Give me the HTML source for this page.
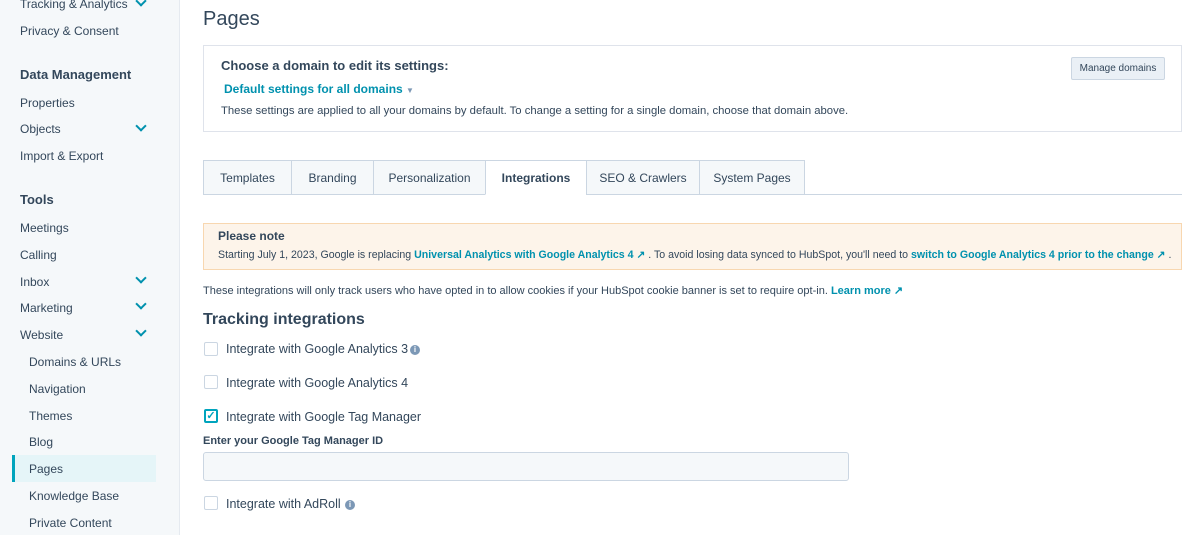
<!DOCTYPE html>
<html><head><style>
*{margin:0;padding:0;box-sizing:border-box}
body{width:1200px;height:535px;overflow:hidden;font-family:"Liberation Sans",sans-serif;color:#33475b;background:#fff;position:relative;font-size:13px}
.sb{position:absolute;left:0;top:0;width:180px;height:535px;background:#f5f8fa;border-right:1px solid #e5eaf0}
.a{position:absolute;white-space:nowrap}
.si{left:20px;font-size:12px;line-height:14px}
.sub{left:29px}
.h{font-weight:bold;font-size:13px}
.chev{position:absolute;left:137px;width:8px;height:8px;border-right:2px solid #0091ae;border-bottom:2px solid #0091ae;transform:rotate(45deg)}
.link{color:#0091ae;font-weight:bold}
.tab{position:absolute;top:160px;height:35px;border:1px solid #cbd6e2;background:#f5f8fa;font-size:12px;line-height:34px;text-align:center}
.cb{position:absolute;left:204px;width:14px;height:14px;border:1px solid #cbd6e2;border-radius:2px;background:#fff}
.lbl{left:226px;font-size:12.5px}
.info{position:absolute;width:10px;height:10px;border-radius:50%;background:#7c98b6;color:#fff;font-size:8px;line-height:10px;text-align:center;font-weight:bold}
</style></head><body>
<div class="sb">
<div class="a si" style="top:-3px">Tracking &amp; Analytics</div><div class="chev" style="top:-3px"></div>
<div class="a si" style="top:24px">Privacy &amp; Consent</div>
<div class="a si h" style="top:68px">Data Management</div>
<div class="a si" style="top:96px">Properties</div>
<div class="a si" style="top:122px">Objects</div><div class="chev" style="top:122px"></div>
<div class="a si" style="top:149px">Import &amp; Export</div>
<div class="a si h" style="top:193px">Tools</div>
<div class="a si" style="top:221px">Meetings</div>
<div class="a si" style="top:248px">Calling</div>
<div class="a si" style="top:275px">Inbox</div><div class="chev" style="top:274px"></div>
<div class="a si" style="top:301px">Marketing</div><div class="chev" style="top:300px"></div>
<div class="a si" style="top:328px">Website</div><div class="chev" style="top:327px"></div>
<div class="a si sub" style="top:355px">Domains &amp; URLs</div>
<div class="a si sub" style="top:382px">Navigation</div>
<div class="a si sub" style="top:409px">Themes</div>
<div class="a si sub" style="top:435px">Blog</div>
<div class="a" style="left:12px;top:455px;width:144px;height:27px;background:#e5f5f8;border-left:3px solid #00a4bd"></div>
<div class="a si sub" style="top:462px">Pages</div>
<div class="a si sub" style="top:489px">Knowledge Base</div>
<div class="a si sub" style="top:516px">Private Content</div>
</div>

<div class="a" style="left:203px;top:8px;font-size:20px;font-weight:300">Pages</div>
<div class="a" style="left:203px;top:45px;width:979px;height:87px;border:1px solid #dfe3eb"></div>
<div class="a h" style="left:221px;top:58px;font-size:13px">Choose a domain to edit its settings:</div>
<div class="a link" style="left:224px;top:82px;font-size:12px">Default settings for all domains <span style="font-size:8px;color:#7c98b6">▼</span></div>
<div class="a" style="left:221px;top:105px;font-size:11.3px">These settings are applied to all your domains by default. To change a setting for a single domain, choose that domain above.</div>
<div class="a" style="left:1071px;top:57px;width:94px;height:23px;background:#eaf0f6;border:1px solid #cbd6e2;border-radius:2px;font-size:10px;line-height:22px;text-align:center">Manage domains</div>

<div class="a" style="left:203px;top:194px;width:979px;border-top:1px solid #cbd6e2"></div>
<div class="tab" style="left:203px;width:89px">Templates</div>
<div class="tab" style="left:291px;width:83px">Branding</div>
<div class="tab" style="left:373px;width:113px">Personalization</div>
<div class="tab" style="left:485px;width:102px;background:#fff;border-bottom:1px solid #fff;font-weight:bold">Integrations</div>
<div class="tab" style="left:586px;width:114px">SEO &amp; Crawlers</div>
<div class="tab" style="left:699px;width:106px">System Pages</div>

<div class="a" style="left:203px;top:223px;width:979px;height:47px;background:#fdf4ea;border:1px solid #f8d7b0"></div>
<div class="a h" style="left:218px;top:229px;font-size:12px">Please note</div>
<div class="a" style="left:218px;top:249px;font-size:10.6px">Starting July 1, 2023, Google is replacing <span class="link">Universal Analytics with Google Analytics 4 ↗</span> . To avoid losing data synced to HubSpot, you'll need to <span class="link">switch to Google Analytics 4 prior to the change ↗</span> .</div>
<div class="a" style="left:203px;top:284px;font-size:11px">These integrations will only track users who have opted in to allow cookies if your HubSpot cookie banner is set to require opt-in. <span class="link">Learn more ↗</span></div>
<div class="a h" style="left:203px;top:311px;font-size:16px">Tracking integrations</div>

<div class="cb" style="top:342px"></div><div class="a lbl" style="top:342px">Integrate with Google Analytics 3</div><div class="info" style="left:410px;top:345px">i</div>
<div class="cb" style="top:375px"></div><div class="a lbl" style="top:376px">Integrate with Google Analytics 4</div>
<div class="cb" style="top:409px;border:2px solid #00a4bd;color:#00a4bd;font-size:11px;line-height:10px;text-align:center;font-weight:bold">✓</div><div class="a lbl" style="top:410px">Integrate with Google Tag Manager</div>
<div class="a h" style="left:203px;top:435px;font-size:11px">Enter your Google Tag Manager ID</div>
<div class="a" style="left:203px;top:452px;width:646px;height:29px;background:#f5f8fa;border:1px solid #cbd6e2;border-radius:3px"></div>
<div class="cb" style="top:496px"></div><div class="a lbl" style="top:497px">Integrate with AdRoll</div><div class="info" style="left:345px;top:500px">i</div>
</body></html>
